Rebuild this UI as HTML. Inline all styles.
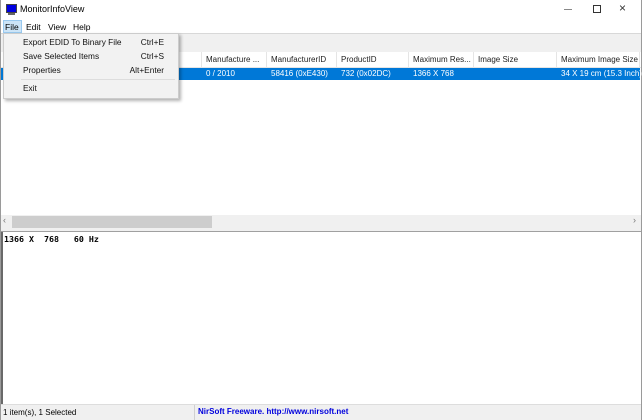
<!DOCTYPE html>
<html><head><style>
*{margin:0;padding:0;box-sizing:border-box}
body{width:642px;height:420px;overflow:hidden;font-family:"Liberation Sans",sans-serif;font-size:8.5px;color:#000;background:#fff;position:relative}
.a{position:absolute}
.hd{position:absolute;top:52px;height:16px;line-height:16px;padding-left:4px;border-right:1px solid #e5e5e5;color:#222;white-space:nowrap;overflow:hidden;font-size:8px}
.cell{position:absolute;top:68px;height:12px;line-height:12px;padding-left:4px;color:#fff;white-space:nowrap;font-size:8px}
.mi{position:absolute;left:23px;font-size:8.3px;color:#111}
.sc{position:absolute;left:0;width:164px;text-align:right;font-size:8.3px;color:#111}
</style></head><body>
<div class="a" style="left:0;top:0;width:642px;height:420px;border:1px solid #9a9a9a;border-top:none"></div>
<div class="a" style="left:6px;top:4px;width:11px;height:9px;background:#0000e0;border:1px solid #444"></div>
<div class="a" style="left:8px;top:13px;width:7px;height:2px;background:#666"></div>
<div class="a" style="left:20px;top:4px;font-size:9px">MonitorInfoView</div>
<div class="a" style="left:564px;top:9px;width:8px;height:1px;background:#888"></div>
<div class="a" style="left:593px;top:5px;width:8px;height:8px;border:1px solid #333"></div>
<div class="a" style="left:619px;top:1px;font-size:12px;color:#333">×</div>
<div class="a" style="left:3px;top:20px;width:19px;height:13px;background:#cce4f7;border:1px solid #99c9ef"></div>
<div class="a" style="left:5px;top:22px;font-size:8.5px">File</div>
<div class="a" style="left:26px;top:22px;font-size:8.5px">Edit</div>
<div class="a" style="left:48px;top:22px;font-size:8.5px">View</div>
<div class="a" style="left:73px;top:22px;font-size:8.5px">Help</div>
<div class="a" style="left:1px;top:33px;width:640px;height:19px;background:#f0f0f0;border-top:1px solid #d8d8d8"></div>
<div class="a" style="left:1px;top:52px;width:640px;height:16px;background:#fff;border-bottom:1px solid #e5e5e5"></div>
<div class="hd" style="left:170px;width:32px;padding-left:0">er</div>
<div class="hd" style="left:202px;width:65px">Manufacture ...</div>
<div class="hd" style="left:267px;width:70px">ManufacturerID</div>
<div class="hd" style="left:337px;width:72px">ProductID</div>
<div class="hd" style="left:409px;width:65px">Maximum Res...</div>
<div class="hd" style="left:474px;width:83px">Image Size</div>
<div class="hd" style="left:557px;width:83px">Maximum Image Size</div>
<div class="a" style="left:1px;top:68px;width:639px;height:12px;background:#0078d7"></div>
<div class="cell" style="left:202px">0 / 2010</div>
<div class="cell" style="left:267px">58416 (0xE430)</div>
<div class="cell" style="left:337px">732 (0x02DC)</div>
<div class="cell" style="left:409px">1366 X 768</div>
<div class="cell" style="left:557px">34 X 19 cm (15.3 Inch)</div>
<div class="a" style="left:1px;top:215px;width:640px;height:14px;background:#f0f0f0"></div>
<div class="a" style="left:12px;top:216px;width:200px;height:12px;background:#cdcdcd"></div>
<div class="a" style="left:3px;top:215px;font-size:9px;color:#777">‹</div>
<div class="a" style="left:633px;top:215px;font-size:9px;color:#777">›</div>
<div class="a" style="left:1px;top:229px;width:640px;height:3px;background:#f0f0f0;border-bottom:1px solid #a0a0a0"></div>
<div class="a" style="left:1px;top:232px;width:2px;height:172px;background:#696969"></div>
<div class="a" style="left:4px;top:234px;font-family:'DejaVu Sans Mono','Liberation Mono',monospace;font-weight:bold;font-size:8.3px;white-space:pre">1366 X  768   60 Hz</div>
<div class="a" style="left:1px;top:404px;width:640px;height:16px;background:#f0f0f0;border-top:1px solid #ddd"></div>
<div class="a" style="left:3px;top:408px;font-size:8px">1 item(s), 1 Selected</div>
<div class="a" style="left:194px;top:405px;width:1px;height:15px;background:#d0d0d0"></div>
<div class="a" style="left:198px;top:407px;font-size:8px;color:#0000dd;font-weight:bold">NirSoft Freeware.  http://www.nirsoft.net</div>
<div class="a" style="left:3px;top:33px;width:176px;height:66px;background:#f2f2f2;border:1px solid #ccc;box-shadow:2px 2px 3px rgba(0,0,0,.3)"></div>
<div class="mi" style="top:37px">Export EDID To Binary File</div>
<div class="mi" style="top:51px">Save Selected Items</div>
<div class="mi" style="top:65px">Properties</div>
<div class="a" style="left:21px;top:79px;width:154px;height:1px;background:#ddd"></div>
<div class="mi" style="top:83px">Exit</div>
<div class="sc" style="top:37px">Ctrl+E</div>
<div class="sc" style="top:51px">Ctrl+S</div>
<div class="sc" style="top:65px">Alt+Enter</div>
</body></html>
